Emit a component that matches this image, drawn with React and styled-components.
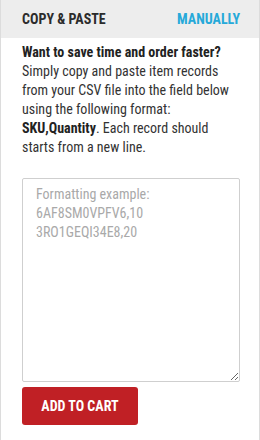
import React from "react";
import styled, { createGlobalStyle } from "styled-components";

const Global = createGlobalStyle`
  html, body { margin: 0; padding: 0; background: #fff; }
  body { font-family: Roboto, "Liberation Sans", sans-serif; }
`;

const Panel = styled.div`
  width: 260px;
  height: 440px;
  box-sizing: border-box;
  border-left: 1px solid #dcdcdc;
  border-right: 1px solid #dcdcdc;
  display: flex;
  flex-direction: column;
  font-stretch: 75%;
`;

const Header = styled.div`
  height: 38px;
  background: #ededed;
  display: flex;
  align-items: center;
  justify-content: space-between;
  padding: 0 19px 0 21px;
`;

const Title = styled.span`
  font-size: 14px;
  font-weight: 700;
  color: #2b2b2b;
  text-transform: uppercase;
`;

const Toggle = styled.a`
  font-size: 14px;
  font-weight: 700;
  color: #26a9d9;
  text-transform: uppercase;
  cursor: pointer;
`;

const Body = styled.div`
  padding: 5px 20px 0 21px;
  display: flex;
  flex-direction: column;
`;

const Intro = styled.p`
  margin: 0;
  font-size: 14px;
  line-height: 19px;
  color: #333;
  b { font-weight: 700; color: #222; }
`;

const Area = styled.textarea`
  margin-top: 21px;
  width: 218px;
  height: 204px;
  box-sizing: border-box;
  border: 1px solid #cfcfcf;
  border-radius: 2px;
  padding: 6px 13px;
  font-family: inherit;
  font-stretch: 75%;
  font-size: 14px;
  line-height: 19px;
  color: #333;
  resize: vertical;
  &::placeholder { color: #a9a9a9; }
`;

const Button = styled.button`
  margin-top: 5px;
  width: 116px;
  height: 38px;
  border: none;
  border-radius: 3px;
  background: #c02025;
  color: #fff;
  font-family: inherit;
  font-stretch: 75%;
  font-size: 14px;
  font-weight: 700;
  text-transform: uppercase;
  cursor: pointer;
`;

export default function App() {
  return (
    <>
      <Global />
      <Panel>
        <Header>
          <Title>Copy &amp; Paste</Title>
          <Toggle>Manually</Toggle>
        </Header>
        <Body>
          <Intro>
            <b>Want to save time and order faster?</b> Simply copy and paste item records from your CSV file into the field below using the following format: <b>SKU,Quantity</b>. Each record should starts from a new line.
          </Intro>
          <Area placeholder={"Formatting example:\n6AF8SM0VPFV6,10\n3RO1GEQI34E8,20"} />
          <Button>Add to cart</Button>
        </Body>
      </Panel>
    </>
  );
}
